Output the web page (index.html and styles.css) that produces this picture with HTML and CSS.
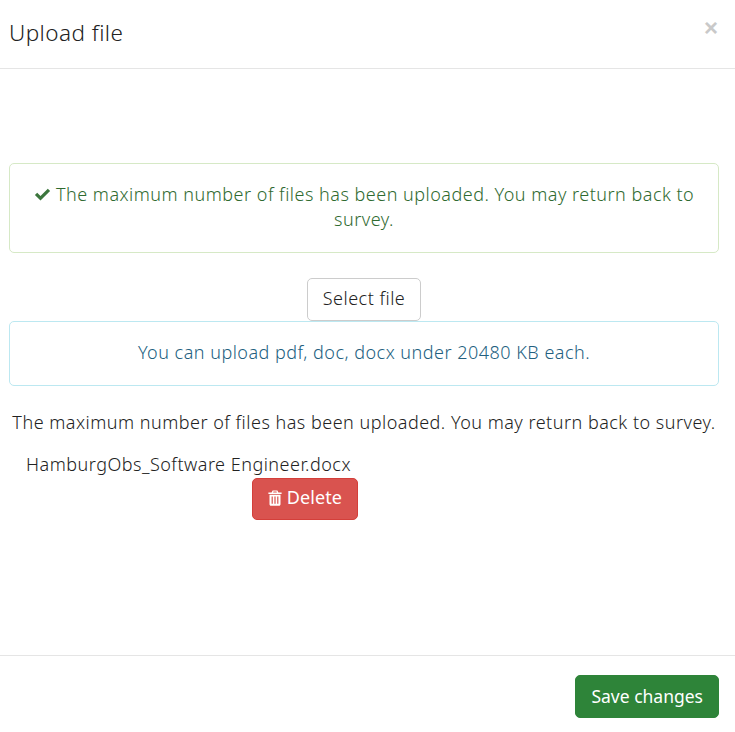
FILE: index.html
```html
<!DOCTYPE html>
<html lang="en">
<head>
<meta charset="UTF-8" />
<meta name="viewport" content="width=device-width, initial-scale=1" />
<title>Upload file</title>
<link rel="stylesheet" href="styles.css">
</head>
<body>

<div class="modal">
  <!-- Header -->
  <header class="modal-header">
    <h4 class="modal-title">Upload file</h4>
    <button class="close" aria-label="Close">×</button>
  </header>

  <!-- Body -->
  <main class="modal-body">
    <div class="alert alert-success">
      <svg class="icon-check" viewBox="0 0 16 13" aria-hidden="true"><path d="M6 12.6 0.4 7 2.7 4.7 6 8 13.3 0.7 15.6 3z"/></svg>
      The maximum number of files has been uploaded. You may return back to survey.
    </div>

    <div class="select-row">
      <button class="btn btn-default">Select file</button>
    </div>
    <div class="alert alert-info">You can upload pdf, doc, docx under 20480 KB each.</div>

    <p class="notice">The maximum number of files has been uploaded. You may return back to survey.</p>

    <div class="file-item">
      <div class="file-name">HamburgObs_Software Engineer.docx</div>
      <button class="btn btn-danger">
        <svg class="icon-trash" viewBox="0 0 14 16" aria-hidden="true"><path fill-rule="evenodd" d="M4.6 0.4H9.4L10.4 2.6H13.6V4H0.4V2.6H3.6ZM5.5 1.6 5.1 2.6H8.9L8.5 1.6ZM1.5 4.8H12.5V14.2C12.5 15.1 11.9 15.7 11.1 15.7H2.9C2.1 15.7 1.5 15.1 1.5 14.2ZM3.6 6.4V13.8H4.8V6.4ZM6.4 6.4V13.8H7.6V6.4ZM9.2 6.4V13.8H10.4V6.4Z"/></svg>
        Delete
      </button>
    </div>
  </main>

  <!-- Footer -->
  <footer class="modal-footer">
    <button class="btn btn-success">Save changes</button>
  </footer>
</div>

</body>
</html>
```

FILE: styles.css
```css
* {
  box-sizing: border-box;
}
body {
  margin: 0;
  background: #fff;
  color: #222;
  font-family: "Noto Sans", sans-serif;
  font-size: 18px;
  font-weight: 300;
  line-height: 25px;
  letter-spacing: 0.49px;
}
.modal {
  width: 735px;
  height: 732px;
  display: flex;
  flex-direction: column;
}

/* Header */
.modal-header {
  height: 69px;
  padding: 0 16px 0 9px;
  border-bottom: 1px solid #e5e5e5;
  display: flex;
  justify-content: space-between;
  align-items: flex-start;
}
.modal-title {
  margin: 20px 0 0;
  font-size: 22.5px;
  font-weight: 300;
  line-height: 26px;
  letter-spacing: 0.45px;
}
.close {
  margin: 15px 1px 0 0;
  padding: 0;
  border: 0;
  background: transparent;
  color: #c9c9c9;
  font-family: "Liberation Sans", sans-serif;
  font-size: 24px;
  font-weight: 700;
  line-height: 26px;
}

/* Body */
.modal-body {
  flex-grow: 1;
  padding: 94px 16px 0 9px;
}
.alert {
  padding: 18px 15px 20px;
  border: 1px solid;
  border-radius: 5px;
  text-align: center;
}
.alert-success {
  border-color: #d6e9c6;
  color: #2f6a30;
}
.alert-info {
  border-color: #bce8f1;
  color: #235f7f;
}
.icon-check {
  width: 17px;
  height: 13px;
  fill: #3c763d;
}
.select-row {
  margin-top: 25px;
  text-align: center;
}
.notice {
  margin: 24px 0 0;
  text-align: center;
  white-space: nowrap;
}
.file-item {
  margin-top: 17px;
  width: 349px;
}
.file-name {
  padding-left: 17px;
  line-height: 25px;
}

/* Buttons */
.btn {
  display: inline-block;
  height: 43px;
  padding: 0 15px 2px;
  border: 1px solid transparent;
  border-radius: 5px;
  font-family: inherit;
  font-size: 18px;
  font-weight: 300;
  line-height: 25px;
  letter-spacing: inherit;
}
.select-row .btn {
  display: block;
  margin: 0 auto;
}
.btn-default {
  background: #fff;
  border-color: #ccc;
  color: #222;
}
.btn-danger {
  display: block;
  height: 42px;
  padding-bottom: 3px;
  margin: 1px 0 0 auto;
  background: #d9534f;
  border-color: #d43f3a;
  color: #fff;
  font-weight: 400;
  letter-spacing: 0.1px;
}
.icon-trash {
  width: 14px;
  height: 16px;
  fill: #fff;
  vertical-align: -2px;
}
.btn-success {
  padding: 0 15px;
  background: #2e8439;
  border-color: #2e8439;
  color: #fff;
  font-size: 17.5px;
  font-weight: 400;
  letter-spacing: 0;
}

/* Footer */
.modal-footer {
  height: 77px;
  padding: 19px 16px 0 0;
  border-top: 1px solid #e5e5e5;
  text-align: right;
}
```
